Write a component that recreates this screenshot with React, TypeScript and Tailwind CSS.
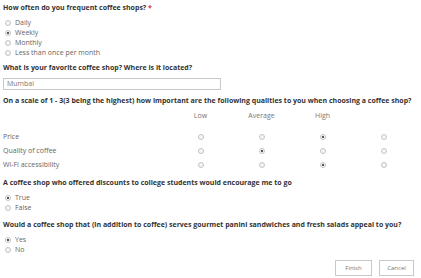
import React from "react";

const Radio: React.FC<{ checked?: boolean }> = ({ checked }) => (
  <span className="inline-flex items-center justify-center w-[6px] h-[6px] rounded-full border border-[#c4c4c4] bg-[#f4f4f4] shrink-0">
    {checked && <span className="w-[2px] h-[2px] rounded-full bg-[#222]" />}
  </span>
);

const Option: React.FC<{ label: string; checked?: boolean }> = ({ label, checked }) => (
  <div className="flex items-center h-[10px] pl-[2px] gap-[4px]">
    <Radio checked={checked} />
    <span className="text-[#666]">{label}</span>
  </div>
);

const Title: React.FC<{ children: React.ReactNode; className?: string }> = ({ children, className }) => (
  <div className={"h-[10px] leading-[10px] font-bold text-[#333] " + (className ?? "")}>{children}</div>
);

const rows: { label: string; pick: number }[] = [
  { label: "Price", pick: 2 },
  { label: "Quality of coffee", pick: 1 },
  { label: "Wi-Fi accessibility", pick: 2 },
];

export default function App() {
  return (
    <div className="w-[421px] h-[278px] bg-white px-[3px] pt-[3px] text-[7px] leading-[10px] font-['Open_Sans',sans-serif] overflow-hidden">
      {/* Q1 */}
      <Title>
        How often do you frequent coffee shops? <span className="text-[#d33]">*</span>
      </Title>
      <div className="mt-[5px] flex flex-col">
        <Option label="Daily" />
        <Option label="Weekly" checked />
        <Option label="Monthly" />
        <Option label="Less than once per month" />
      </div>

      {/* Q2 */}
      <Title className="mt-[5px]">What is your favorite coffee shop? Where is it located?</Title>
      <div className="mt-[5px] w-[218px] h-[12px] border border-[#c8c8c8] flex items-center px-[3px] text-[#777]">
        Mumbai
      </div>

      {/* Q3 */}
      <Title className="mt-[6px]">
        On a scale of 1 - 3(3 being the highest) how important are the following qualities to you when choosing a coffee shop?
      </Title>
      <div className="mt-[5px] grid grid-cols-[167px_61px_61px_61px_61px] text-[#777]">
        <div className="h-[10px]" />
        <div className="text-center">Low</div>
        <div className="text-center">Average</div>
        <div className="text-center">High</div>
        <div />
      </div>
      <div className="mt-[9px] flex flex-col">
        {rows.map((r) => (
          <div key={r.label} className="grid grid-cols-[167px_61px_61px_61px_61px] h-[14px] items-center">
            <div className="text-[#666]">{r.label}</div>
            {[0, 1, 2, 3].map((c) => (
              <div key={c} className="flex justify-center">
                <Radio checked={r.pick === c} />
              </div>
            ))}
          </div>
        ))}
      </div>

      {/* Q4 */}
      <Title className="mt-[6px]">A coffee shop who offered discounts to college students would encourage me to go</Title>
      <div className="mt-[5px] flex flex-col">
        <Option label="True" checked />
        <Option label="False" />
      </div>

      {/* Q5 */}
      <Title className="mt-[7px]">
        Would a coffee shop that (in addition to coffee) serves gourmet panini sandwiches and fresh salads appeal to you?
      </Title>
      <div className="mt-[5px] flex flex-col">
        <Option label="Yes" checked />
        <Option label="No" />
      </div>

      <div className="mt-[5px] flex justify-end gap-[7px] pr-[4px]">
        <button className="w-[37px] h-[16px] border border-[#c8c8c8] bg-white text-[6px] text-[#777]">Finish</button>
        <button className="w-[35px] h-[16px] border border-[#c8c8c8] bg-white text-[6px] text-[#777]">Cancel</button>
      </div>
    </div>
  );
}
